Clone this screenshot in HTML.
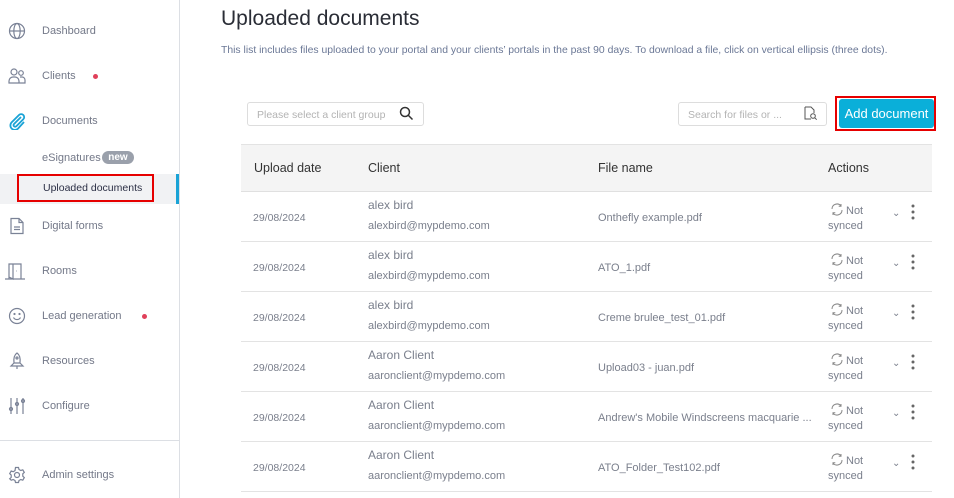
<!DOCTYPE html>
<html><head><style>
*{margin:0;padding:0;box-sizing:border-box}
body{width:954px;height:498px;overflow:hidden;background:#fff;font-family:"Liberation Sans",sans-serif;position:relative;color:#666b7a}
.sb{position:absolute;left:0;top:0;width:180px;height:498px;border-right:1px solid #dcdfe4}
.it{position:absolute;left:42px;font-size:11px;color:#737888}
.ic{position:absolute;left:8px;width:18px;height:18px}
.dot{position:absolute;width:5px;height:5px;border-radius:50%;background:#e0405a}
.abs{position:absolute}
.th{position:absolute;font-size:12.5px;color:#333}
.row{position:absolute;left:241px;width:691px;height:50px;border-bottom:1px solid #e3e3e3}
.row span{position:absolute;font-size:11px;color:#7a7f8c}
</style></head><body>
<div class="sb">
<svg class="ic" style="top:22px" viewBox="0 0 18 18" fill="none" stroke="#7a8296" stroke-width="1.2"><circle cx="9" cy="9" r="7.5"/><ellipse cx="9" cy="9" rx="3.2" ry="7.5"/><path d="M1.5 9h15"/></svg>
<div class="it" style="top:25px">Dashboard</div>
<svg class="ic" style="top:67px" viewBox="0 0 18 18" fill="none" stroke="#7a8296" stroke-width="1.2"><circle cx="6" cy="5" r="3"/><circle cx="13" cy="6" r="2.3"/><path d="M1 16v-2a4 4 0 0 1 4-4h2a4 4 0 0 1 4 4v2zM12 10h2a3 3 0 0 1 3 3v3h-6"/></svg>
<div class="it" style="top:70px">Clients</div><div class="dot" style="left:93px;top:74px"></div>
<svg class="ic" style="top:112px" viewBox="0 0 18 18" fill="none" stroke="#1aa3d6" stroke-width="1.8"><path d="M13 5l-7 7a1.6 1.6 0 0 0 2.3 2.3l7-7a3 3 0 0 0-4.3-4.3l-7.3 7.3a4.4 4.4 0 0 0 6.3 6.3L16 10"/></svg>
<div class="it" style="top:115px">Documents</div>
<div class="it" style="top:152px">eSignatures</div>
<div class="abs" style="left:102px;top:151px;width:32px;height:13px;border-radius:7px;background:#9aa0ab;color:#fff;font-size:10px;font-weight:bold;text-align:center;line-height:13px">new</div>
<div class="abs" style="left:0;top:174px;width:178px;height:30px;background:#f1f2f4"></div>
<div class="abs" style="left:176px;top:174px;width:3px;height:30px;background:#1aa3d6"></div>
<div class="abs" style="left:17px;top:174px;width:137px;height:28px;border:2px solid #e60000"></div>
<div class="it" style="top:182px;left:43px;color:#2b2f45;font-size:10.5px">Uploaded documents</div>
<svg class="ic" style="top:217px" viewBox="0 0 18 18" fill="none" stroke="#7a8296" stroke-width="1.2"><path d="M3 1.5h8l4 4v11H3zM11 1.5v4h4M6 10h6M6 12.5h6"/></svg>
<div class="it" style="top:220px">Digital forms</div>
<svg class="ic" style="top:262px;left:4px;width:22px" viewBox="0 0 22 18" fill="none" stroke="#7a8296" stroke-width="1.2"><path d="M1 17h20M5 17V2h12v15M9 2v15l-4-2M12 9h.5"/></svg>
<div class="it" style="top:265px">Rooms</div>
<svg class="ic" style="top:307px" viewBox="0 0 18 18" fill="none" stroke="#7a8296" stroke-width="1.2"><circle cx="9" cy="9" r="7.5"/><path d="M5.5 10.5a4 4 0 0 0 7 0"/><circle cx="6.5" cy="7" r=".5"/><circle cx="11.5" cy="7" r=".5"/></svg>
<div class="it" style="top:310px">Lead generation</div><div class="dot" style="left:142px;top:314px"></div>
<svg class="ic" style="top:352px" viewBox="0 0 18 18" fill="none" stroke="#7a8296" stroke-width="1.2"><path d="M9 1c3 2 3.5 6 3 10H6C5.5 7 6 3 9 1zM6 11l-3 3h12l-3-3M9 14v3"/><circle cx="9" cy="6" r="1"/></svg>
<div class="it" style="top:355px">Resources</div>
<svg class="ic" style="top:397px" viewBox="0 0 18 18" fill="none" stroke="#7a8296" stroke-width="1.2"><path d="M3 1v16M9 1v16M15 1v16"/><circle cx="3" cy="12" r="1.5"/><circle cx="9" cy="7" r="1.5"/><circle cx="15" cy="4" r="1.5"/></svg>
<div class="it" style="top:400px">Configure</div>
<div class="abs" style="left:0;top:440px;width:179px;border-top:1px solid #dcdfe4"></div>
<svg class="ic" style="top:466px" viewBox="0 0 18 18" fill="none" stroke="#7a8296" stroke-width="1.2"><circle cx="9" cy="9" r="2.5"/><path d="M7.5 1.5h3l.5 2 1.8 1 2-.7 1.5 2.6-1.5 1.4v2.4l1.5 1.4-1.5 2.6-2-.7-1.8 1-.5 2h-3l-.5-2-1.8-1-2 .7L1.7 12.8l1.5-1.4V9l-1.5-1.4L3.2 5l2 .7L7 4.6z"/></svg>
<div class="it" style="top:469px">Admin settings</div>
</div>

<div class="abs" style="left:221px;top:7px;font-size:21px;color:#2a2d36">Uploaded documents</div>
<div class="abs" style="left:221px;top:45px;font-size:10.4px;color:#6b7896;white-space:nowrap">This list includes files uploaded to your portal and your clients’ portals in the past 90 days. To download a file, click on vertical ellipsis (three dots).</div>

<div class="abs" style="left:247px;top:102px;width:177px;height:24px;border:1px solid #ddd;border-radius:3px;font-size:10.5px;color:#b3b3b3;padding:6px 9px">Please select a client group</div>
<svg class="abs" style="left:399px;top:106px" width="15" height="15" viewBox="0 0 15 15" fill="none" stroke="#333" stroke-width="1.5"><circle cx="6" cy="6" r="4.5"/><path d="M9.5 9.5l4 4"/></svg>
<div class="abs" style="left:678px;top:102px;width:149px;height:24px;border:1px solid #ddd;border-radius:3px;font-size:10.5px;color:#b3b3b3;padding:6px 9px">Search for files or ...</div>
<svg class="abs" style="left:804px;top:106px" width="14" height="15" viewBox="0 0 14 15" fill="none" stroke="#555" stroke-width="1"><path d="M1 1h6l3 3v3M1 1v12h6"/><circle cx="9" cy="10" r="2.3"/><path d="M10.7 11.7l2 2"/></svg>
<div class="abs" style="left:835px;top:96px;width:101px;height:35px;border:2px solid #e60000"></div>
<div class="abs" style="left:839px;top:99px;width:95px;height:29px;background:#0aafd9;border-radius:3px;color:#fff;font-size:13px;text-align:center;line-height:29px">Add document</div>

<div class="abs" style="left:241px;top:144px;width:691px;height:48px;background:#f4f4f4;border-top:1px solid #e3e3e3;border-bottom:1px solid #e0e0e0"></div>
<div class="th" style="left:254px;top:161px">Upload date</div>
<div class="th" style="left:368px;top:161px">Client</div>
<div class="th" style="left:598px;top:161px">File name</div>
<div class="th" style="left:828px;top:161px">Actions</div>

<div id="rows"></div>
<script>
var d=[["alex bird","alexbird@mypdemo.com","Onthefly example.pdf"],["alex bird","alexbird@mypdemo.com","ATO_1.pdf"],["alex bird","alexbird@mypdemo.com","Creme brulee_test_01.pdf"],["Aaron Client","aaronclient@mypdemo.com","Upload03 - juan.pdf"],["Aaron Client","aaronclient@mypdemo.com","Andrew's Mobile Windscreens macquarie ..."],["Aaron Client","aaronclient@mypdemo.com","ATO_Folder_Test102.pdf"]];
var h="";d.forEach(function(r,i){var t=192+i*50;
h+='<div class="row" style="top:'+t+'px"><span style="left:12px;top:20px;font-size:10.5px">29/08/2024</span><span style="left:127px;top:6px;font-size:12px">'+r[0]+'</span><span style="left:127px;top:28px">'+r[1]+'</span><span style="left:357px;top:20px">'+r[2]+'</span>'+
'<svg style="position:absolute;left:589px;top:11px" width="14" height="13" viewBox="0 0 14 13" fill="none" stroke="#888" stroke-width="1"><path d="M2 6a5 5 0 0 1 9-3M12 7a5 5 0 0 1-9 3M11 1v2.3H8.7M3 12V9.7h2.3"/></svg>'+
'<span style="left:605px;top:13px">Not</span><span style="left:587px;top:28px">synced</span><span style="left:651px;top:16px;font-size:10px">&#8964;</span>'+
'<svg style="position:absolute;left:670px;top:12px" width="4" height="16"><circle cx="2" cy="2" r="1.5" fill="#666"/><circle cx="2" cy="8" r="1.5" fill="#666"/><circle cx="2" cy="14" r="1.5" fill="#666"/></svg></div>';});
document.getElementById("rows").innerHTML=h;
</script>
</body></html>
